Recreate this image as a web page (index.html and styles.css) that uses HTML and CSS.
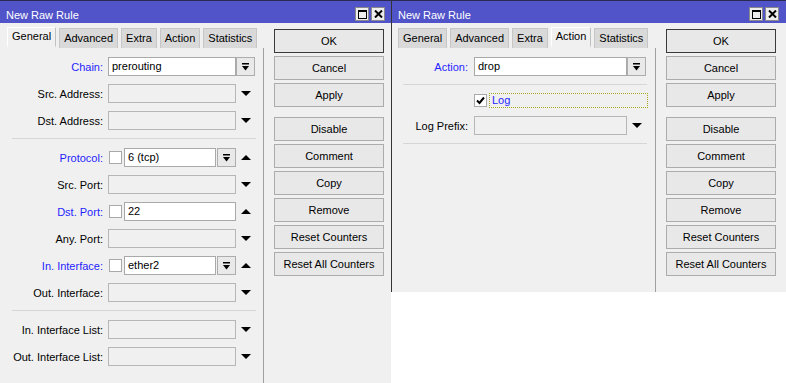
FILE: index.html
```html
<!DOCTYPE html>
<html>
<head>
<meta charset="utf-8">
<title>New Raw Rule</title>
<link rel="stylesheet" href="styles.css">
</head>
<body>
<div class="desk">
  <div class="win win-left">
    <div class="titlebar">
      <span class="title">New Raw Rule</span>
      <div class="tb-btns">
        <span class="tb-btn"><svg width="9" height="9" viewBox="0 0 9 9"><rect x="0.5" y="0.5" width="8" height="8" fill="none" stroke="#000"/><rect x="0" y="0" width="9" height="2" fill="#000"/></svg></span>
        <span class="tb-btn"><svg width="9" height="8" viewBox="0 0 9 8"><path d="M1 0.5 L8 7.5 M8 0.5 L1 7.5" stroke="#000" stroke-width="2"/></svg></span>
      </div>
    </div>
    <div class="win-body">
      <div class="tabpane">
        <div class="tabs">
          <span class="tab active">General</span>
          <span class="tab">Advanced</span>
          <span class="tab">Extra</span>
          <span class="tab">Action</span>
          <span class="tab">Statistics</span>
        </div>
        <div class="panel">
          <div class="row">
            <span class="lbl blue">Chain:</span>
            <div class="field"><div class="input">prerouting</div></div>
            <div class="side"><span class="ddbtn"><svg width="7" height="8" viewBox="0 0 7 8"><rect x="0" y="0" width="7" height="1.5" fill="#000"/><polygon points="0,3 7,3 3.5,7.5" fill="#000"/></svg></span></div>
          </div>
          <div class="row">
            <span class="lbl">Src. Address:</span>
            <div class="field"><div class="input empty"></div></div>
            <div class="side"><svg width="10" height="5" viewBox="0 0 10 5"><polygon points="0,0 10,0 5,5" fill="#000"/></svg></div>
          </div>
          <div class="row">
            <span class="lbl">Dst. Address:</span>
            <div class="field"><div class="input empty"></div></div>
            <div class="side"><svg width="10" height="5" viewBox="0 0 10 5"><polygon points="0,0 10,0 5,5" fill="#000"/></svg></div>
          </div>
          <div class="sep"></div>
          <div class="row">
            <span class="lbl blue">Protocol:</span>
            <div class="field"><span class="chk"></span><div class="input">6 (tcp)</div><span class="ddbtn"><svg width="7" height="8" viewBox="0 0 7 8"><rect x="0" y="0" width="7" height="1.5" fill="#000"/><polygon points="0,3 7,3 3.5,7.5" fill="#000"/></svg></span></div>
            <div class="side"><svg width="10" height="5" viewBox="0 0 10 5"><polygon points="0,5 10,5 5,0" fill="#000"/></svg></div>
          </div>
          <div class="row">
            <span class="lbl">Src. Port:</span>
            <div class="field"><div class="input empty"></div></div>
            <div class="side"><svg width="10" height="5" viewBox="0 0 10 5"><polygon points="0,0 10,0 5,5" fill="#000"/></svg></div>
          </div>
          <div class="row">
            <span class="lbl blue">Dst. Port:</span>
            <div class="field"><span class="chk"></span><div class="input">22</div></div>
            <div class="side"><svg width="10" height="5" viewBox="0 0 10 5"><polygon points="0,5 10,5 5,0" fill="#000"/></svg></div>
          </div>
          <div class="row">
            <span class="lbl">Any. Port:</span>
            <div class="field"><div class="input empty"></div></div>
            <div class="side"><svg width="10" height="5" viewBox="0 0 10 5"><polygon points="0,0 10,0 5,5" fill="#000"/></svg></div>
          </div>
          <div class="row">
            <span class="lbl blue">In. Interface:</span>
            <div class="field"><span class="chk"></span><div class="input">ether2</div><span class="ddbtn"><svg width="7" height="8" viewBox="0 0 7 8"><rect x="0" y="0" width="7" height="1.5" fill="#000"/><polygon points="0,3 7,3 3.5,7.5" fill="#000"/></svg></span></div>
            <div class="side"><svg width="10" height="5" viewBox="0 0 10 5"><polygon points="0,5 10,5 5,0" fill="#000"/></svg></div>
          </div>
          <div class="row">
            <span class="lbl">Out. Interface:</span>
            <div class="field"><div class="input empty"></div></div>
            <div class="side"><svg width="10" height="5" viewBox="0 0 10 5"><polygon points="0,0 10,0 5,5" fill="#000"/></svg></div>
          </div>
          <div class="sep"></div>
          <div class="row">
            <span class="lbl">In. Interface List:</span>
            <div class="field"><div class="input empty"></div></div>
            <div class="side"><svg width="10" height="5" viewBox="0 0 10 5"><polygon points="0,0 10,0 5,5" fill="#000"/></svg></div>
          </div>
          <div class="row">
            <span class="lbl">Out. Interface List:</span>
            <div class="field"><div class="input empty"></div></div>
            <div class="side"><svg width="10" height="5" viewBox="0 0 10 5"><polygon points="0,0 10,0 5,5" fill="#000"/></svg></div>
          </div>
        </div>
      </div>
      <div class="buttons">
        <span class="btn default">OK</span>
        <span class="btn">Cancel</span>
        <span class="btn gap">Apply</span>
        <span class="btn">Disable</span>
        <span class="btn">Comment</span>
        <span class="btn">Copy</span>
        <span class="btn">Remove</span>
        <span class="btn">Reset Counters</span>
        <span class="btn">Reset All Counters</span>
      </div>
    </div>
  </div>

  <div class="win win-right">
    <div class="titlebar">
      <span class="title">New Raw Rule</span>
      <div class="tb-btns">
        <span class="tb-btn"><svg width="9" height="9" viewBox="0 0 9 9"><rect x="0.5" y="0.5" width="8" height="8" fill="none" stroke="#000"/><rect x="0" y="0" width="9" height="2" fill="#000"/></svg></span>
        <span class="tb-btn"><svg width="9" height="8" viewBox="0 0 9 8"><path d="M1 0.5 L8 7.5 M8 0.5 L1 7.5" stroke="#000" stroke-width="2"/></svg></span>
      </div>
    </div>
    <div class="win-body">
      <div class="tabpane">
        <div class="tabs">
          <span class="tab">General</span>
          <span class="tab">Advanced</span>
          <span class="tab">Extra</span>
          <span class="tab active">Action</span>
          <span class="tab">Statistics</span>
        </div>
        <div class="panel">
          <div class="row">
            <span class="lbl blue">Action:</span>
            <div class="field"><div class="input">drop</div></div>
            <div class="side"><span class="ddbtn"><svg width="7" height="8" viewBox="0 0 7 8"><rect x="0" y="0" width="7" height="1.5" fill="#000"/><polygon points="0,3 7,3 3.5,7.5" fill="#000"/></svg></span></div>
          </div>
          <div class="sep"></div>
          <div class="row logrow">
            <span class="lbl"></span>
            <div class="field wide"><span class="chk checked"><svg width="11" height="11" viewBox="0 0 11 11"><path d="M2 5.5 L4.5 8 L9 2.5" fill="none" stroke="#000" stroke-width="2"/></svg></span><span class="focus blue">Log</span></div>
          </div>
          <div class="row">
            <span class="lbl">Log Prefix:</span>
            <div class="field"><div class="input empty"></div></div>
            <div class="side"><svg width="10" height="5" viewBox="0 0 10 5"><polygon points="0,0 10,0 5,5" fill="#000"/></svg></div>
          </div>
          <div class="sep"></div>
        </div>
      </div>
      <div class="buttons">
        <span class="btn default">OK</span>
        <span class="btn">Cancel</span>
        <span class="btn gap">Apply</span>
        <span class="btn">Disable</span>
        <span class="btn">Comment</span>
        <span class="btn">Copy</span>
        <span class="btn">Remove</span>
        <span class="btn">Reset Counters</span>
        <span class="btn">Reset All Counters</span>
      </div>
    </div>
  </div>
</div>
</body>
</html>
```

FILE: styles.css
```css
html, body {
  margin: 0;
  padding: 0;
  background: #ffffff;
  overflow: hidden;
}

body {
  font-family: "Liberation Sans", Arial, sans-serif;
  font-size: 11px;
  color: #000;
}

.desk {
  display: flex;
  align-items: flex-start;
  width: 786px;
  height: 383px;
  overflow: hidden;
}

.win {
  display: flex;
  flex-direction: column;
  background: #f0f0f0;
  box-sizing: border-box;
}

.win-left {
  width: 391px;
  height: 400px;
  flex: none;
}

.win-right {
  flex: 1;
  height: 292px;
  border-left: 1px solid #333333;
}

.titlebar {
  height: 23px;
  box-sizing: border-box;
  border-top: 1px solid #2a2a50;
  background: #5154c9;
  display: flex;
  align-items: flex-start;
  justify-content: space-between;
  flex: none;
}

.title {
  color: #ffffff;
  padding-left: 6px;
  margin-top: 8px;
  line-height: 13px;
}

.tb-btns {
  display: flex;
  gap: 2px;
  margin-top: 6px;
  margin-right: 6px;
}

.win-right .tb-btns {
  margin-right: 7px;
}

.tb-btn {
  width: 14px;
  height: 14px;
  box-sizing: border-box;
  border: 1px solid #8a8a8a;
  background: #ededed;
  display: flex;
  align-items: center;
  justify-content: center;
}

.win-body {
  flex: 1;
  display: flex;
  padding-left: 7px;
  min-height: 0;
}

.win-right .win-body {
  padding-left: 6px;
}

.tabpane {
  width: 257px;
  display: flex;
  flex-direction: column;
  flex: none;
}

.win-right .tabpane {
  width: 258px;
}

.tabs {
  display: flex;
  align-items: flex-end;
  gap: 3px;
  height: 21px;
  margin-top: 4px;
  flex: none;
}

.tab {
  height: 20px;
  line-height: 19px;
  padding: 0 4px;
  box-sizing: border-box;
  background: #d9d9d9;
  border: 1px solid #c6c6c6;
  border-bottom: none;
  white-space: nowrap;
}

.tab.active {
  height: 21px;
  line-height: 17px;
  background: #f0f0f0;
  border-color: #ffffff #c0c0c0 #f0f0f0 #ffffff;
  border-style: solid;
  padding: 0 4px;
}

.panel {
  flex: 1;
  border-right: 1px solid #a0a0a0;
  padding: 9px 7px 0 5px;
  --lw: 96px;
}

.win-right .panel {
  padding-right: 8px;
  --lw: 71px;
}

.row {
  display: grid;
  grid-template-columns: var(--lw) 1fr 19px;
  height: 19px;
  margin-bottom: 8px;
  padding-right: 1px;
  align-items: center;
}

.logrow {
  height: 15px;
  margin-top: -1px;
}

.lbl {
  text-align: right;
  padding-right: 5px;
  white-space: nowrap;
}

.win-right .lbl {
  padding-right: 6px;
}

.blue {
  color: #1f1fff;
}

.field {
  display: flex;
  align-items: center;
  height: 19px;
  min-width: 0;
}

.field.wide {
  grid-column: 2 / 4;
  height: 15px;
  margin-right: -2px;
}

.input {
  flex: 1;
  height: 19px;
  box-sizing: border-box;
  border: 1px solid #a9a9a9;
  background: #ffffff;
  padding-left: 3px;
  line-height: 17px;
  white-space: nowrap;
  min-width: 0;
}

.input.empty {
  background: #f0f0f0;
  border-color: #b6b6b6;
}

.chk {
  width: 13px;
  height: 13px;
  box-sizing: border-box;
  border: 1px solid #a9a9a9;
  background: #ffffff;
  margin: 0 2px 0 1px;
  flex: none;
  display: flex;
  align-items: center;
  justify-content: center;
}

.chk.checked {
  margin-left: 0;
}

.focus {
  flex: 1;
  height: 15px;
  box-sizing: border-box;
  border: 1px dotted #a8a820;
  padding-left: 2px;
  line-height: 13px;
}

.ddbtn {
  width: 19px;
  height: 19px;
  box-sizing: border-box;
  border: 1px solid #adadad;
  background: #e9e9e9;
  display: flex;
  align-items: center;
  justify-content: center;
  flex: none;
}

.field .ddbtn {
  margin-left: 1px;
}

.side {
  display: flex;
  align-items: center;
  justify-content: center;
  height: 19px;
}

.sep {
  height: 1px;
  background: #d6d6d6;
  margin: 1px 0 9px 0;
}

.buttons {
  display: flex;
  flex-direction: column;
  width: 110px;
  margin-left: 10px;
  padding-top: 6px;
  flex: none;
}

.btn {
  height: 24px;
  box-sizing: border-box;
  border: 1px solid #acacac;
  background: #e8e8e8;
  display: flex;
  align-items: center;
  justify-content: center;
  margin-bottom: 3px;
  white-space: nowrap;
}

.btn.default {
  border-color: #3a3a3a;
}

.btn.gap {
  margin-bottom: 10px;
}
```
